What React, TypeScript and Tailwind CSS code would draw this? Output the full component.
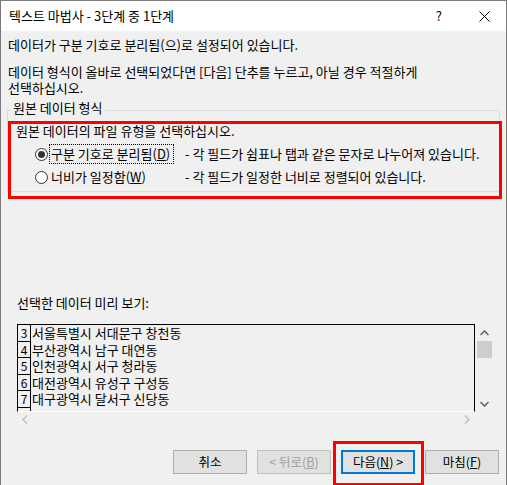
import type { ReactNode } from 'react';

const FONT = { fontFamily: '"Noto Sans CJK KR", "Noto Sans", sans-serif' };

const ROWS = [
  { n: '3', text: '서울특별시 서대문구 창천동' },
  { n: '4', text: '부산광역시 남구 대연동' },
  { n: '5', text: '인천광역시 서구 청라동' },
  { n: '6', text: '대전광역시 유성구 구성동' },
  { n: '7', text: '대구광역시 달서구 신당동' },
];

function Radio({ checked }: { checked?: boolean }) {
  return (
    <span className="w-[13px] h-[13px] rounded-full border border-[#333] bg-white flex items-center justify-center shrink-0">
      {checked && <span className="w-[7px] h-[7px] rounded-full bg-[#333]" />}
    </span>
  );
}

function Btn({ children, primary, disabled }: { children: ReactNode; primary?: boolean; disabled?: boolean }) {
  return (
    <div
      className={`w-[74px] h-[24px] flex items-center justify-center text-[12.5px] bg-[#e1e1e1] ${
        primary ? 'border-2 border-[#0078d7]' : disabled ? 'border border-[#bfbfbf] text-[#a0a0a0]' : 'border border-[#adadad]'
      }`}
    >
      {children}
    </div>
  );
}

export default function App() {
  return (
    <div style={FONT} className="relative w-[507px] h-[485px] bg-[#f0f0f0] border border-[#7a7a7a] border-b-0 text-[13px] text-black overflow-hidden">
      {/* title bar */}
      <div className="h-[30px] bg-white flex items-center pl-[8px] pr-[16px]">
        <span>텍스트 마법사 - 3단계 중 1단계</span>
        <span className="ml-auto mr-[37px]">?</span>
        <svg width="11" height="11" viewBox="0 0 11 11" className="shrink-0">
          <path d="M0.5 0.5 L10.5 10.5 M10.5 0.5 L0.5 10.5" stroke="#000" strokeWidth="1" />
        </svg>
      </div>

      <div className="px-[6px]">
        <div className="mt-[6px] pl-[1px] leading-[16px]">데이터가 구분 기호로 분리됨(으)로 설정되어 있습니다.</div>
        <div className="mt-[11px] pl-[1px] leading-[16px]">
          <div>데이터 형식이 올바로 선택되었다면 [다음] 단추를 누르고, 아닐 경우 적절하게</div>
          <div>선택하십시오.</div>
        </div>

        {/* group box */}
        <div className="mt-[14px] border border-[#dcdcdc] h-[82px] pl-[8px]">
          <div className="-mt-[11px] -ml-[5px] h-[16px] leading-[16px]">
            <span className="bg-[#f0f0f0] px-[2px]">원본 데이터 형식</span>
          </div>
          <div className="mt-[7px] leading-[16px]">원본 데이터의 파일 유형을 선택하십시오.</div>
          <div className="mt-[5px] flex items-center h-[20px]">
            <span className="ml-[19px]"><Radio checked /></span>
            <span className="ml-[1px] w-[125px] h-[20px] border border-dotted border-black flex items-center pl-[1px] whitespace-nowrap">
              구분 기호로 분리됨(<u>D</u>)
            </span>
            <span className="ml-[11px] whitespace-nowrap">- 각 필드가 쉼표나 탭과 같은 문자로 나누어져 있습니다.</span>
          </div>
          <div className="mt-[3px] flex items-center h-[20px]">
            <span className="ml-[19px]"><Radio /></span>
            <span className="ml-[3px] w-[134px] whitespace-nowrap">너비가 일정함(<u>W</u>)</span>
            <span className="whitespace-nowrap">- 각 필드가 일정한 너비로 정렬되어 있습니다.</span>
          </div>
        </div>

        {/* preview */}
        <div className="mt-[103px] pl-[10px] leading-[16px]">선택한 데이터 미리 보기:</div>
        <div className="mt-[13px] ml-[10px] flex">
          <div className="w-[458px]">
            <div className="h-[88px] border-t border-l border-r border-black border-b border-b-white flex overflow-hidden">
              <div className="w-[13px] border-r border-black flex flex-col shrink-0">
                {ROWS.map((r) => (
                  <div key={r.n} className="h-[16.5px] border-b border-black text-[12px] leading-[15px] text-center">
                    {r.n}
                  </div>
                ))}
              </div>
              <div className="flex flex-col">
                {ROWS.map((r) => (
                  <div key={r.n} className="h-[16.5px] leading-[16px] pl-[1px] whitespace-nowrap">
                    {r.text}
                  </div>
                ))}
              </div>
            </div>
            <div className="h-[14px] flex items-center justify-between px-[5px]">
              <svg width="6" height="9" viewBox="0 0 6 9"><path d="M5 0.5 L1 4.5 L5 8.5" stroke="#c0c0c0" strokeWidth="1.5" fill="none" /></svg>
              <svg width="6" height="9" viewBox="0 0 6 9"><path d="M1 0.5 L5 4.5 L1 8.5" stroke="#c0c0c0" strokeWidth="1.5" fill="none" /></svg>
            </div>
          </div>
          <div className="w-[16px] ml-[1px] h-[88px] flex flex-col items-center">
            <div className="h-[17px] flex items-center justify-center">
              <svg width="9" height="6" viewBox="0 0 9 6"><path d="M0.5 5 L4.5 1 L8.5 5" stroke="#606060" strokeWidth="1.5" fill="none" /></svg>
            </div>
            <div className="w-[15px] h-[17px] bg-[#cdcdcd]" />
            <div className="flex-1" />
            <div className="h-[17px] flex items-center justify-center">
              <svg width="9" height="6" viewBox="0 0 9 6"><path d="M0.5 1 L4.5 5 L8.5 1" stroke="#606060" strokeWidth="1.5" fill="none" /></svg>
            </div>
          </div>
        </div>

        {/* buttons */}
        <div className="mt-[24px] flex justify-end gap-[10px] pr-[1px]">
          <Btn>취소</Btn>
          <Btn disabled>&lt; 뒤로(<u>B</u>)</Btn>
          <Btn primary>다음(<u>N</u>) &gt;</Btn>
          <Btn>마침(<u>F</u>)</Btn>
        </div>
      </div>

      {/* red highlight annotations */}
      <div className="absolute left-[7px] top-[120px] w-[494px] h-[78px] border-[3px] border-[#ff0000]" />
      <div className="absolute left-[332px] top-[440px] w-[91px] h-[45px] border-[3px] border-[#ff0000]" />
    </div>
  );
}
